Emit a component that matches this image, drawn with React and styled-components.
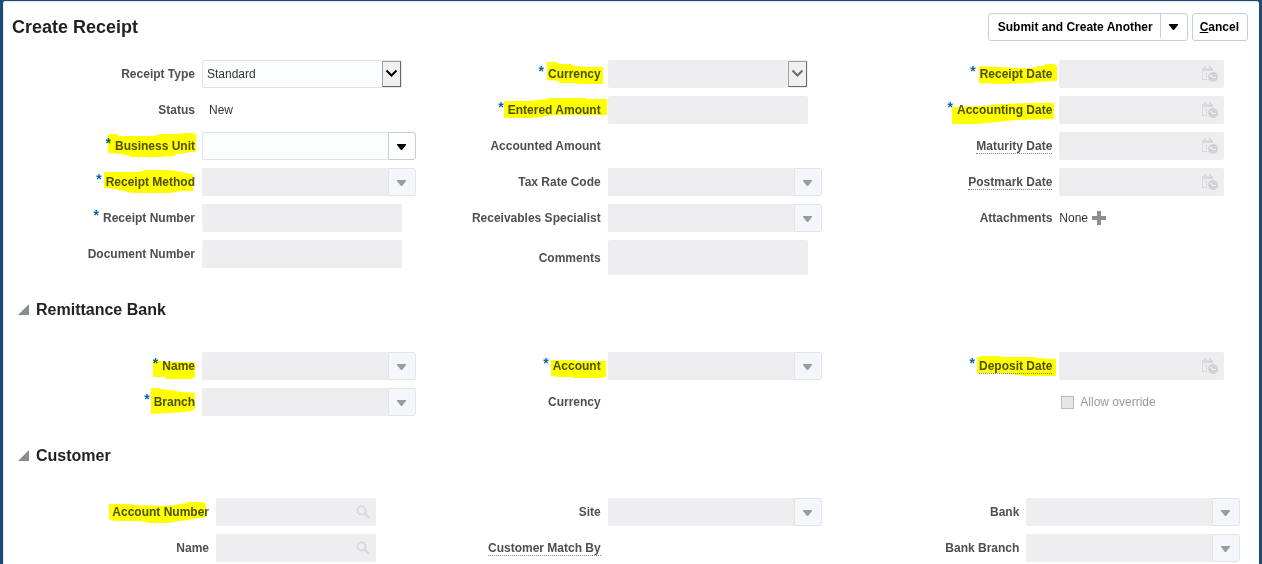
import { useId } from "react";
import styled, { createGlobalStyle, css } from "styled-components";

// marker outlines, in pixels from the top left corner of the label text
const marks = {
  businessUnit: "-7,-5 2,-5 4,-3 38,-3 45,-5 62,-5 71,-6 79,-6 81,-4 81,13 76,13 65,15 60,15 60,17 42,18 15,18 15,17 6,15 -7,14",
  receiptMethod: "-2,-3 32,-3 41,-5 62,-5 70,-4 80,-2 87,-1 87,16 76,16 64,18 26,18 17,16 9,14 2,13 -2,13",
  currency: "-1,-5 8,-5 12,-3 24,-3 25,-1 40,0 55,0 55,17 29,17 29,16 11,16 11,14 -1,13",
  enteredAmount: "-4,-2 20,-2 40,-4 40,-5 79,-5 79,-4 99,-4 99,12 45,12 33,14 19,15 -4,15",
  receiptDate: "-1,-1 20,0 38,1 51,1 60,-1 65,-1 65,-3 74,-3 77,-1 77,14 54,15 54,16 21,17 -1,16",
  accountingDate: "-5,4 23,3 44,1 76,0 97,0 97,16 60,17 40,19 20,21 -5,21",
  bankName: "-9,2 0,2 2,3 33,3 33,18 29,20 3,20 3,18 -9,18",
  branch: "-3,-7 5,-7 6,-6 17,-5 28,-3 41,-2 41,14 38,16 29,17 15,18 -3,19",
  account: "-2,1 23,1 23,2 53,2 53,18 47,19 20,19 20,18 3,18 3,17 -2,17",
  depositDate: "-2,-2 2,-2 2,-3 22,-3 22,-2 56,-2 56,-1 77,0 77,17 46,17 40,16 24,14 -2,14",
  accountNumber: "-3,-1 20,-1 20,0 53,1 62,0 75,-2 75,-3 91,-3 94,-1 94,12 88,13 75,15 56,18 35,18 35,17 25,16 3,16 -3,14",
};

const Label = ({ text, htmlFor, required, hint, mark }) => {
  return (
    <LabelCell as={htmlFor ? "label" : "span"} htmlFor={htmlFor}>
      {required && <Star>*</Star>}
      <LabelText $hint={hint}>
        {text}
        {mark && (
          <Marker width="1" height="1" aria-hidden="true">
            <polygon points={marks[mark]} fill="#ffff00" />
          </Marker>
        )}
      </LabelText>
    </LabelCell>
  );
};

const Triangle = () => (
  <svg width="9" height="6" viewBox="0 0 9 6" aria-hidden="true">
    <path d="M0 0h9v1L5 6H4L0 1z" fill="currentColor" />
  </svg>
);

const CalendarIcon = () => (
  <svg width="16" height="16" viewBox="0 0 16 16" aria-hidden="true">
    <path d="M0 2h2V0h2v2h3V0h2v2h2v3H1v8h4v1H0z" fill="#d9d9db" />
    <path d="M3 7h2v5H4V8H3z" fill="#d9d9db" />
    <circle cx="11" cy="11" r="5" fill="#d2d2d4" />
    <path d="M8 9l3 2.5h3" fill="none" stroke="#f0f0f2" strokeWidth="1.2" />
  </svg>
);

const SearchIcon = () => (
  <svg width="14" height="14" viewBox="0 0 14 14" aria-hidden="true">
    <circle cx="5.5" cy="5.5" r="4.1" fill="none" stroke="#d9d9db" strokeWidth="1.9" />
    <path d="M8.4 8.4l4.6 4.6" stroke="#d9d9db" strokeWidth="2.4" />
  </svg>
);

const PlusIcon = () => (
  <svg width="14" height="14" viewBox="0 0 14 14" aria-hidden="true">
    <path d="M5 0h4v5h5v4H9v5H5V9H0V5h5z" fill="#8a8f94" />
  </svg>
);

const Field = ({ type, label, value, disabled = true, ...rest }) => {
  const id = useId();
  const tied = type !== "output" && type !== "attachments";

  return (
    <Row>
      <Label text={label} htmlFor={tied ? id : undefined} {...rest} />
      {type === "output" && <Output>{value}</Output>}
      {type === "text" && <TextInput id={id} disabled={disabled} />}
      {type === "area" && <TextArea id={id} disabled={disabled} />}
      {type === "select" && (
        <SelectBox>
          <Select id={id} disabled={disabled}>
            <option>{value}</option>
          </Select>
          <SelectArrow $disabled={disabled}>
            <svg width="13" height="9" viewBox="0 0 13 9" aria-hidden="true">
              <path d="M1.5 1.5l5 5 5-5" fill="none" stroke="currentColor" strokeWidth="2" />
            </svg>
          </SelectArrow>
        </SelectBox>
      )}
      {type === "combo" && (
        <Combo>
          <ComboInput id={id} disabled={disabled} />
          <ComboButton type="button" disabled={disabled} aria-label={label}>
            <Triangle />
          </ComboButton>
        </Combo>
      )}
      {type === "date" && (
        <IconField $width={165}>
          <IconInput id={id} disabled={disabled} />
          <IconButton type="button" disabled={disabled} aria-label={label}>
            <CalendarIcon />
          </IconButton>
        </IconField>
      )}
      {type === "search" && (
        <IconField $width={160}>
          <IconInput id={id} disabled={disabled} />
          <IconButton type="button" disabled={disabled} aria-label={label}>
            <SearchIcon />
          </IconButton>
        </IconField>
      )}
      {type === "attachments" && (
        <Attachments>
          {value}
          <AddButton type="button" aria-label={label}>
            <PlusIcon />
          </AddButton>
        </Attachments>
      )}
    </Row>
  );
};

const Section = ({ title, gap, children }) => (
  <section>
    <SectionTitle $gap={gap}>
      <Disclosure type="button" aria-label={title}>
        <svg width="11" height="11" viewBox="0 0 11 11" aria-hidden="true">
          <path d="M11 0v11H0z" fill="#878c91" />
        </svg>
      </Disclosure>
      {title}
    </SectionTitle>
    <FieldGrid>{children}</FieldGrid>
  </section>
);

const App = () => {
  return (
    <>
      <GlobalStyle />
      <Page>
        <Panel>
          <Header>
            <Title>Create Receipt</Title>
            <Actions>
              <SplitButton>
                <SplitMain type="button">Submit and Create Another</SplitMain>
                <SplitArrow type="button" aria-label="Submit">
                  <Triangle />
                </SplitArrow>
              </SplitButton>
              <Button type="button">
                <u>C</u>ancel
              </Button>
            </Actions>
          </Header>

          <FieldGrid>
            <Column $label={192}>
              <Field type="select" label="Receipt Type" value="Standard" disabled={false} />
              <Field type="output" label="Status" value="New" />
              <Field type="combo" label="Business Unit" required mark="businessUnit" disabled={false} />
              <Field type="combo" label="Receipt Method" required mark="receiptMethod" />
              <Field type="text" label="Receipt Number" required />
              <Field type="text" label="Document Number" />
            </Column>
            <Column $label={179}>
              <Field type="select" label="Currency" required mark="currency" />
              <Field type="text" label="Entered Amount" required mark="enteredAmount" />
              <Field type="output" label="Accounted Amount" />
              <Field type="combo" label="Tax Rate Code" />
              <Field type="combo" label="Receivables Specialist" />
              <Field type="area" label="Comments" />
            </Column>
            <Column $label={212}>
              <Field type="date" label="Receipt Date" required mark="receiptDate" />
              <Field type="date" label="Accounting Date" required mark="accountingDate" />
              <Field type="date" label="Maturity Date" hint />
              <Field type="date" label="Postmark Date" hint />
              <Field type="attachments" label="Attachments" value="None" />
            </Column>
          </FieldGrid>

          <Section title="Remittance Bank" gap={25}>
            <Column $label={192}>
              <Field type="combo" label="Name" required mark="bankName" />
              <Field type="combo" label="Branch" required mark="branch" />
            </Column>
            <Column $label={179}>
              <Field type="combo" label="Account" required mark="account" />
              <Field type="output" label="Currency" />
            </Column>
            <Column $label={212}>
              <Field type="date" label="Deposit Date" required hint mark="depositDate" />
              <Row>
                <CheckLabel>
                  <Checkbox type="checkbox" disabled />
                  Allow override
                </CheckLabel>
              </Row>
            </Column>
          </Section>

          <Section title="Customer" gap={30}>
            <Column $label={206}>
              <Field type="search" label="Account Number" mark="accountNumber" />
              <Field type="search" label="Name" />
            </Column>
            <Column $label={179}>
              <Field type="combo" label="Site" />
              <Field type="output" label="Customer Match By" hint />
            </Column>
            <Column $label={179}>
              <Field type="combo" label="Bank" />
              <Field type="combo" label="Bank Branch" />
            </Column>
          </Section>
        </Panel>
      </Page>
    </>
  );
};

const GlobalStyle = createGlobalStyle`
  * {
    box-sizing: border-box;
  }

  body {
    margin: 0;
    background: #1f4b73;
    color: #333;
    font-family: "Liberation Sans", Arial, sans-serif;
    font-size: 12px;
    line-height: 14px;
  }

  button, input, select, textarea {
    margin: 0;
    font: inherit;
    color: inherit;
  }
`;

const Page = styled.div`
  display: flex;
  min-height: 100vh;
  padding: 1px 3px 0;
`;

const Panel = styled.main`
  flex: 1;
  min-width: 0;
  background: #fff;
  border-radius: 3px 3px 0 0;
  box-shadow: inset 1px 1px 0 #dce8f3;
`;

const Header = styled.header`
  display: flex;
  align-items: center;
  justify-content: space-between;
  padding: 12px 11px 19px 9px;
`;

const Title = styled.h1`
  margin: 0;
  font-size: 18px;
  line-height: 20px;
  color: #222;
`;

const Actions = styled.div`
  display: flex;
  gap: 4px;
`;

const buttonFrame = css`
  height: 28px;
  border: 1px solid #c4ced7;
  border-radius: 3px;
  background: #fff;
`;

const SplitButton = styled.div`
  ${buttonFrame}
  display: flex;
  align-items: flex-start;
`;

const SplitMain = styled.button`
  height: 26px;
  padding: 0 7px 0 9px;
  border: none;
  background: none;
  font-weight: bold;
  color: #000;
`;

const SplitArrow = styled.button`
  display: flex;
  align-items: center;
  justify-content: center;
  width: 27px;
  height: 24px;
  padding: 2px 0 0;
  border: none;
  border-left: 1px solid #c4ced7;
  background: none;
  color: #000;
`;

const Button = styled.button`
  ${buttonFrame}
  padding: 0 8px 0 7px;
  font-weight: bold;
  color: #000;
`;

const FieldGrid = styled.div`
  display: grid;
  grid-template-columns: repeat(3, 1fr);
  align-items: start;
`;

const Row = styled.div`
  display: grid;
  grid-template-columns: var(--label) 1fr;
  column-gap: 7px;
  align-items: center;
  min-height: 28px;
`;

const Column = styled.div`
  --label: ${(props) => props.$label}px;
  display: grid;
  row-gap: 8px;
  min-width: 0;
`;

const LabelCell = styled.label`
  display: flex;
  justify-content: flex-end;
  gap: 4px;
  font-weight: bold;
  white-space: nowrap;
  color: #4f4f4f;
`;

const Star = styled.span`
  font-size: 14px;
  line-height: 8px;
  font-weight: bold;
  color: #0b63ad;
`;

const LabelText = styled.span`
  position: relative;
  ${(props) =>
    props.$hint &&
    css`
      margin-bottom: -1px;
      border-bottom: 1px dotted #888;
    `}
`;

const Marker = styled.svg`
  position: absolute;
  top: 0;
  left: 0;
  overflow: visible;
  pointer-events: none;
  mix-blend-mode: multiply;
`;

const Output = styled.output`
  padding-left: 7px;
`;

const inputFrame = css`
  height: 28px;
  padding: 0 4px;
  border: 1px solid #dfe4e7;
  border-radius: 2px;
  background: #fcfdfe;

  &:disabled {
    border-color: #eeeef0;
    background: #eeeef0;
    opacity: 1;
  }
`;

const TextInput = styled.input`
  ${inputFrame}
  width: 200px;
`;

const TextArea = styled.textarea`
  ${inputFrame}
  display: block;
  width: 200px;
  height: 35px;
  resize: none;
`;

const SelectBox = styled.div`
  position: relative;
  width: 200px;
`;

const Select = styled.select`
  ${inputFrame}
  display: block;
  width: 100%;
  appearance: none;
`;

const SelectArrow = styled.span`
  position: absolute;
  top: 1px;
  right: 1px;
  display: flex;
  align-items: center;
  justify-content: center;
  width: 19px;
  height: 26px;
  padding-bottom: 2px;
  border: 1px solid;
  border-color: #a0a0a0 #696969 #696969 #a0a0a0;
  background: #f0f0f0;
  color: ${(props) => (props.$disabled ? "#6d6d6d" : "#000")};
  pointer-events: none;
`;

const Combo = styled.div`
  display: flex;
  width: 214px;
`;

const ComboInput = styled.input`
  ${inputFrame}
  flex: 1;
  min-width: 0;
  border-right: none;
  border-radius: 2px 0 0 2px;
`;

const ComboButton = styled.button`
  display: flex;
  align-items: center;
  justify-content: center;
  width: 28px;
  height: 28px;
  padding: 2px 1px 0 0;
  border: 1px solid #c4ced7;
  border-radius: 0 3px 3px 0;
  background: #fff;
  color: #000;

  &:disabled {
    border-color: #e0e5eb;
    background: #f4f6f9;
    color: #9b9b9b;
  }
`;

const IconField = styled.div`
  display: flex;
  width: ${(props) => props.$width}px;
  height: 28px;
  border-radius: 2px;
  background: #eeeef0;
`;

const IconInput = styled.input`
  flex: 1;
  min-width: 0;
  padding: 0 5px;
  border: none;
  background: none;
`;

const IconButton = styled.button`
  display: flex;
  align-items: center;
  padding: 0 6px 0 0;
  border: none;
  background: none;
`;

const Attachments = styled.div`
  display: flex;
  align-items: center;
  gap: 4px;
`;

const AddButton = styled.button`
  display: flex;
  padding: 0;
  border: none;
  background: none;
`;

const CheckLabel = styled.label`
  grid-column: 2;
  display: flex;
  align-items: center;
  gap: 6px;
  padding-left: 2px;
  color: #999;
`;

const Checkbox = styled.input`
  width: 13px;
  height: 13px;
  appearance: none;
  border: 1px solid #bcbcbc;
  background: #e6e6e6;
`;

const SectionTitle = styled.h2`
  display: flex;
  align-items: center;
  gap: 7px;
  margin: ${(props) => props.$gap}px 0 32px;
  padding-left: 15px;
  font-size: 16px;
  line-height: 20px;
  color: #222;
`;

const Disclosure = styled.button`
  display: flex;
  padding: 0 0 2px;
  border: none;
  background: none;
`;

export default App;
